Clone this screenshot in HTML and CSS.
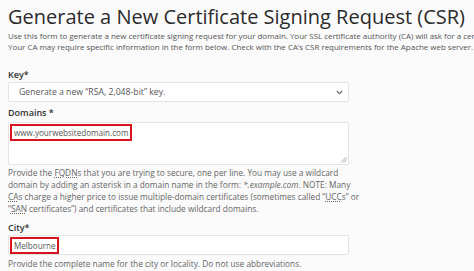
FILE: index.html
```html
<!DOCTYPE html>
<html>
<head>
<meta charset="utf-8">
<link rel="stylesheet" href="styles.css">
</head>
<body>
<div class="page">
  <h1 class="title">Generate a New Certificate Signing Request (CSR)</h1>
  <p class="intro">Use this form to generate a new certificate signing request for your domain. Your SSL certificate authority (CA) will ask for a certificate signing request.<br>Your CA may require specific information in the form below. Check with the CA’s CSR requirements for the Apache web server.</p>

  <div class="field field-key">
    <div class="label">Key*</div>
    <div class="control select">
      <span class="select-text">Generate a new “RSA, 2,048-bit” key.</span>
      <svg class="chev" width="7" height="5" viewBox="0 0 7 5"><path d="M0.8 1 L3.5 3.7 L6.2 1" fill="none" stroke="#666" stroke-width="1.1"/></svg>
    </div>
  </div>

  <div class="field field-domains">
    <div class="label">Domains *</div>
    <div class="control textarea">
      <span class="mark">www.yourwebsitedomain.com</span>
      <svg class="grip" width="7" height="7" viewBox="0 0 7 7"><path d="M1 6.5 L6.5 1 M3.5 6.5 L6.5 3.5" stroke="#888" stroke-width="0.8"/></svg>
    </div>
    <p class="help">Provide the <span class="abbr">FQDN</span>s that you are trying to secure, one per line. You may use a wildcard<br>domain by adding an asterisk in a domain name in the form: <i>*.example.com</i>. NOTE: Many<br><span class="abbr">CA</span>s charge a higher price to issue multiple-domain certificates (sometimes called “<span class="abbr">UCC</span>s” or<br>“<span class="abbr">SAN</span> certificates”) and certificates that include wildcard domains.</p>
  </div>

  <div class="field field-city">
    <div class="label">City*</div>
    <div class="control input">
      <span class="mark">Melbourne</span>
    </div>
    <p class="help">Provide the complete name for the city or locality. Do not use abbreviations.</p>
  </div>
</div>
</body>
</html>
```
FILE: styles.css
```css
html, body {
  margin: 0;
  padding: 0;
  background: #fafafa;
  overflow: hidden;
}
body {
  font-family: "Open Sans", "Noto Sans", sans-serif;
  color: #333;
}
.page {
  padding: 4px 8px 0 8px;
  width: 341px;
}
.title {
  font-weight: 400;
  font-size: 20px;
  line-height: 26px;
  margin: 0;
  white-space: nowrap;
  color: #2b2b2b;
}
.intro {
  margin: 1px 0 0 0;
  font-size: 7.95px;
  line-height: 11px;
  white-space: nowrap;
  color: #555;
}
.field-key { margin-top: 16px; }
.field-domains { margin-top: 5px; }
.field-city { margin-top: 7px; }
.label {
  font-size: 9px;
  font-weight: 600;
  line-height: 12px;
  color: #333;
  margin-bottom: 1px;
}
.field-domains .label { margin-bottom: 3px; }
.control {
  box-sizing: border-box;
  background: #fff;
  border: 1px solid #e3e3e3;
  border-radius: 2px;
  position: relative;
  font-size: 8.7px;
  color: #555;
}
.select {
  height: 20px;
  display: flex;
  align-items: center;
  padding: 0 10px;
}
.select-text { flex: 1; white-space: nowrap; }
.chev { flex: none; margin-right: -5px; }
.textarea {
  height: 43px;
  padding: 1px 1px;
}
.input {
  height: 20px;
  padding: 1px 1px;
}
.mark {
  display: inline-block;
  border: 2px solid #d7141e;
  padding: 0 2px;
  font-size: 8.1px;
  line-height: 13px;
  color: #555;
}
.grip {
  position: absolute;
  right: 1px;
  bottom: 1px;
}
.help {
  margin: 2px 0 0 0;
  font-size: 8.3px;
  line-height: 12px;
  color: #666;
  width: 370px;
}
.field-city .help { margin-top: 3px; }
.abbr {
  text-decoration: underline dotted;
  text-underline-offset: 1px;
}
```
